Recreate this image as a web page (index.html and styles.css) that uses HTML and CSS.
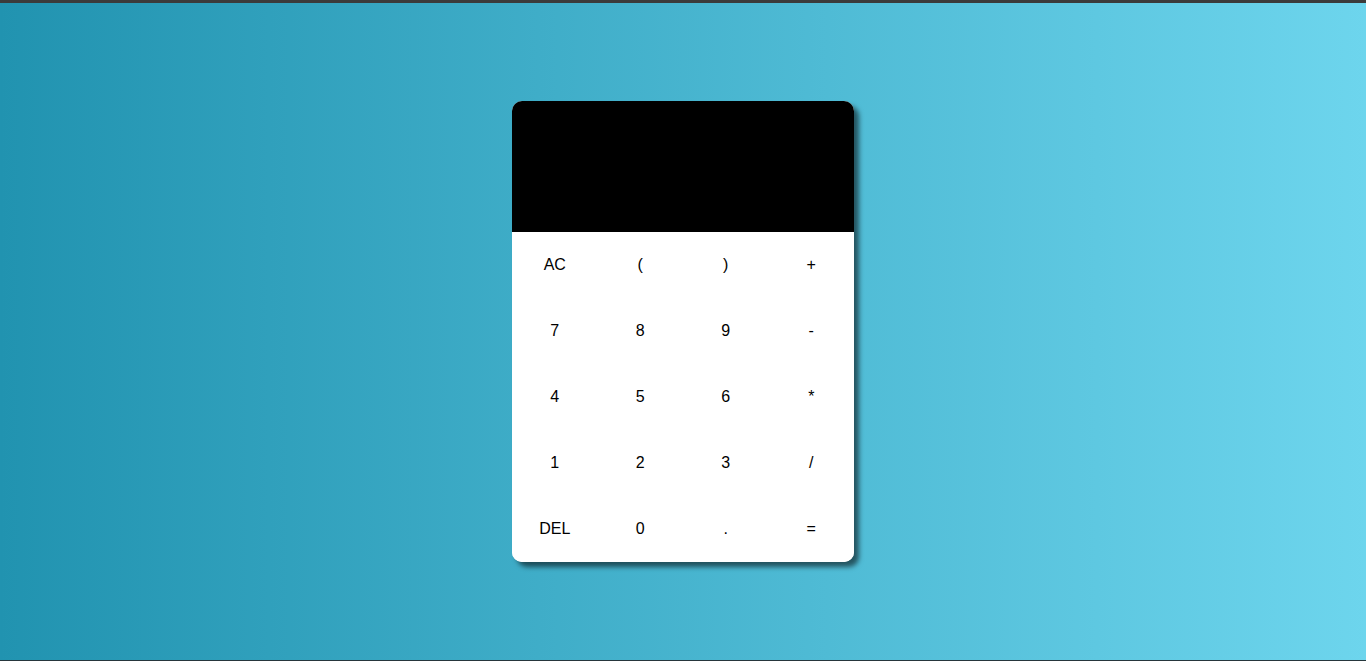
FILE: index.html
```html
<!DOCTYPE html>
<html>
<head>
<meta charset="utf-8">
<title>Calculator</title>
<link rel="stylesheet" href="styles.css">
</head>
<body>
<div class="page">
  <div class="calc">
    <div class="display"></div>
    <div class="keys">
      <button class="key">AC</button>
      <button class="key">(</button>
      <button class="key">)</button>
      <button class="key">+</button>
      <button class="key">7</button>
      <button class="key">8</button>
      <button class="key">9</button>
      <button class="key">-</button>
      <button class="key">4</button>
      <button class="key">5</button>
      <button class="key">6</button>
      <button class="key">*</button>
      <button class="key">1</button>
      <button class="key">2</button>
      <button class="key">3</button>
      <button class="key">/</button>
      <button class="key">DEL</button>
      <button class="key">0</button>
      <button class="key">.</button>
      <button class="key">=</button>
    </div>
  </div>
</div>
</body>
</html>
```
FILE: styles.css
```css
html, body {
  margin: 0;
  padding: 0;
  height: 100%;
}
body {
  box-sizing: border-box;
  border-top: 3px solid #3b3b3b;
  border-bottom: 1px solid #26363c;
  background: linear-gradient(to right, #2193b0, #6dd5ed);
  font-family: "Liberation Sans", Arial, sans-serif;
}
.page {
  height: 100%;
  display: flex;
  align-items: center;
  justify-content: center;
}
.calc {
  width: 342px;
  height: 461px;
  border-radius: 10px;
  overflow: hidden;
  background: #fff;
  box-shadow: 5px 5px 5px rgba(0, 0, 0, 0.55);
  display: flex;
  flex-direction: column;
}
.display {
  height: 131px;
  background: #000;
}
.keys {
  flex: 1;
  display: grid;
  grid-template-columns: repeat(4, 1fr);
  grid-template-rows: repeat(5, 1fr);
}
.key {
  border: none;
  background: #fff;
  font-family: "Liberation Sans", Arial, sans-serif;
  font-size: 16px;
  color: #000;
  padding: 0;
}
```
